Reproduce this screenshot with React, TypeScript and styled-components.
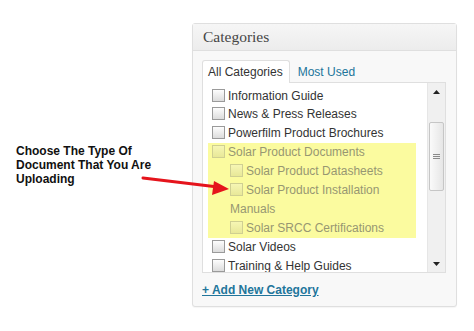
import styled, { createGlobalStyle } from "styled-components";

const GlobalStyle = createGlobalStyle`
  html, body {
    margin: 0;
    padding: 0;
    background: #fff;
  }
  body {
    font-family: "Liberation Sans", Arial, sans-serif;
  }
`;

type Cat = { name: string; children?: string[]; highlight?: boolean };

const categories: Cat[] = [
  { name: "Information Guide" },
  { name: "News & Press Releases" },
  { name: "Powerfilm Product Brochures" },
  {
    name: "Solar Product Documents",
    highlight: true,
    children: [
      "Solar Product Datasheets",
      "Solar Product Installation Manuals",
      "Solar SRCC Certifications",
    ],
  },
  { name: "Solar Videos" },
  { name: "Training & Help Guides" },
];

const App = () => {
  return (
    <>
      <GlobalStyle />
      <Page>
        <Note>
          Choose The Type Of
          <br />
          Document That You Are
          <br />
          Uploading
        </Note>
        <Panel>
          <Header>Categories</Header>
          <Body>
            <Tabs>
              <Tab active>All Categories</Tab>
              <Tab>Most Used</Tab>
            </Tabs>
            <ListBox>
              <List>
                {categories.map((c) => (
                  <Item key={c.name} highlight={c.highlight}>
                    <Label muted={c.highlight}>
                      <Check muted={c.highlight} />
                      {c.name}
                    </Label>
                    {c.children && (
                      <SubList>
                        {c.children.map((s) => (
                          <SubItem key={s}>
                            <Label muted>
                              <Check muted />
                              {s}
                            </Label>
                          </SubItem>
                        ))}
                      </SubList>
                    )}
                  </Item>
                ))}
              </List>
              <ScrollBar>
                <ScrollBtn>
                  <svg width="7" height="4" viewBox="0 0 7 4">
                    <path d="M0 4 L3.5 0 L7 4 Z" fill="#222" />
                  </svg>
                </ScrollBtn>
                <Track>
                  <Thumb>
                    <svg width="7" height="7" viewBox="0 0 7 7">
                      <path d="M0 1.5h7M0 3.5h7M0 5.5h7" stroke="#8a8a8a" strokeWidth="1" />
                    </svg>
                  </Thumb>
                </Track>
                <ScrollBtn>
                  <svg width="7" height="4" viewBox="0 0 7 4">
                    <path d="M0 0 L3.5 4 L7 0 Z" fill="#222" />
                  </svg>
                </ScrollBtn>
              </ScrollBar>
            </ListBox>
            <AddLink href="#">+ Add New Category</AddLink>
          </Body>
        </Panel>
        <Arrow width="474" height="331" viewBox="0 0 474 331">
          <path d="M143 178 L218 187" stroke="#e5141c" strokeWidth="3" strokeLinecap="round" />
          <path d="M214 181 L229 189 L212 195 Z" fill="#e5141c" />
        </Arrow>
      </Page>
    </>
  );
};

export default App;

const Page = styled.div`
  position: relative;
  display: flex;
  align-items: flex-start;
  padding: 23px 0 0 16px;
  height: 331px;
  box-sizing: border-box;
`;

const Note = styled.div`
  width: 176px;
  margin-top: 121px;
  font-size: 12px;
  line-height: 14px;
  font-weight: bold;
  color: #111;
`;

const Panel = styled.div`
  width: 265px;
  box-sizing: border-box;
  border: 1px solid #dfdfdf;
  border-radius: 3px;
  background: #f8f8f8;
  box-shadow: 0 1px 1px rgba(0, 0, 0, 0.04);
`;

const Header = styled.div`
  height: 26px;
  line-height: 26px;
  padding-left: 10px;
  border-bottom: 1px solid #dfdfdf;
  background: linear-gradient(#f6f6f6, #ececec);
  font-family: "Liberation Serif", Georgia, serif;
  font-size: 15.5px;
  color: #464646;
`;

const Body = styled.div`
  padding: 9px 10px 7px 9px;
`;

const Tabs = styled.div`
  display: flex;
  align-items: flex-end;
  position: relative;
  z-index: 1;
`;

const Tab = styled.div<{ active?: boolean }>`
  height: 23px;
  line-height: 23px;
  box-sizing: border-box;
  padding: 0 ${(p) => (p.active ? "6px" : "8px")} 0 5px;
  font-size: 12px;
  color: ${(p) => (p.active ? "#333" : "#21759b")};
  background: ${(p) => (p.active ? "#fff" : "transparent")};
  border: 1px solid ${(p) => (p.active ? "#dfdfdf" : "transparent")};
  border-bottom: none;
  border-radius: 3px 3px 0 0;
  margin-bottom: -1px;
  & + & {
    padding-left: 7px;
  }
`;

const ListBox = styled.div`
  display: flex;
  height: 191px;
  box-sizing: border-box;
  border: 1px solid #dfdfdf;
  background: #fff;
  overflow: hidden;
`;

const List = styled.ul`
  flex: 1;
  list-style: none;
  margin: 0;
  padding: 3px 11px 0 5px;
  overflow: hidden;
`;

const Item = styled.li<{ highlight?: boolean }>`
  padding-left: 4px;
  font-size: 12px;
  line-height: 18.9px;
  background: ${(p) => (p.highlight ? "#fbfb9f" : "transparent")};
  &:first-child {
    padding-top: 0.5px;
  }
`;

const SubList = styled.ul`
  list-style: none;
  margin: 0;
  padding: 0 0 0 18px;
`;

const SubItem = styled.li`
  font-size: 12px;
  line-height: 19px;
`;

const Label = styled.label<{ muted?: boolean }>`
  color: ${(p) => (p.muted ? "#979772" : "#333")};
`;

const Check = styled.span<{ muted?: boolean }>`
  display: inline-block;
  width: 13px;
  height: 13px;
  box-sizing: border-box;
  margin-right: 3px;
  vertical-align: -2px;
  border: 1px solid ${(p) => (p.muted ? "#cfcf92" : "#9a9a9a")};
  background: ${(p) =>
    p.muted
      ? "linear-gradient(#f6f6b4, #e8e898)"
      : "linear-gradient(#fdfdfd, #dcdcdc)"};
`;

const ScrollBar = styled.div`
  width: 17px;
  flex: none;
  display: flex;
  flex-direction: column;
  background: #f0f0f0;
  border-left: 1px solid #e6e6e6;
`;

const ScrollBtn = styled.div`
  height: 17px;
  display: flex;
  align-items: center;
  justify-content: center;
  flex: none;
`;

const Track = styled.div`
  flex: 1;
  padding: 22px 1px 0 1px;
`;

const Thumb = styled.div`
  height: 69px;
  box-sizing: border-box;
  border: 1px solid #c6c6c6;
  border-radius: 2px;
  background: linear-gradient(90deg, #fafafa, #e6e6e6);
  display: flex;
  align-items: center;
  justify-content: center;
`;

const AddLink = styled.a`
  display: block;
  margin-top: 8px;
  font-size: 12px;
  line-height: 18px;
  font-weight: bold;
  color: #21759b;
  text-decoration: underline;
`;

const Arrow = styled.svg`
  position: absolute;
  left: 0;
  top: 0;
  pointer-events: none;
`;
